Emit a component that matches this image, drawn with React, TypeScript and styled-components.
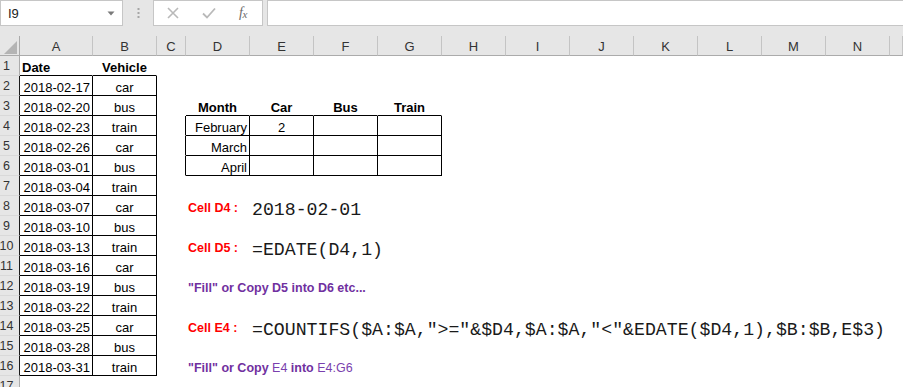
import React from 'react';
import styled, { createGlobalStyle } from 'styled-components';

const Global = createGlobalStyle`
  html, body { margin: 0; padding: 0; background: #fff; overflow: hidden; }
  #root { width: 903px; height: 387px; overflow: hidden; }
`;

const Window = styled.div`
  width: 903px;
  height: 387px;
  overflow: hidden;
  background: #fff;
  font-family: "Liberation Sans", Arial, sans-serif;
  display: flex;
  flex-direction: column;
`;

const FormulaBar = styled.div`
  flex: none;
  height: 36px;
  background: #e6e6e6;
  display: flex;
  align-items: flex-start;
`;

const NameBox = styled.div`
  box-sizing: border-box;
  width: 123px;
  height: 26px;
  background: #fff;
  border: 1px solid #c6c6c6;
  display: flex;
  align-items: center;
  justify-content: space-between;
  padding: 0 7px 0 7px;
  font-size: 13px;
  color: #222;
`;

const Grip = styled.div`
  width: 30px;
  height: 26px;
  display: flex;
  align-items: center;
  justify-content: center;
`;

const FxBox = styled.div`
  box-sizing: border-box;
  width: 110px;
  height: 26px;
  background: #fff;
  border: 1px solid #c6c6c6;
  display: flex;
  align-items: center;
  padding-left: 13px;
  gap: 23px;
`;

const FxLabel = styled.span`
  font-family: "Liberation Serif", "Times New Roman", serif;
  font-style: italic;
  font-size: 14px;
  color: #6b6b6b;
  letter-spacing: -0.5px;
  & > sub {
    font-size: 11px;
    vertical-align: -1px;
  }
`;

const InputBox = styled.div`
  box-sizing: border-box;
  flex: 1;
  height: 26px;
  margin-left: 4px;
  background: #fff;
  border: 1px solid #c6c6c6;
  border-right: none;
`;

const Sheet = styled.div`
  display: grid;
  grid-template-columns: 20px 73px 64px 29px repeat(11, 64px) 1fr;
  grid-auto-rows: 20px;
  overflow: hidden;
`;

const Corner = styled.div`
  box-sizing: border-box;
  background: #e6e6e6;
  border-right: 1px solid #ababab;
  border-bottom: 1px solid #ababab;
  display: flex;
  align-items: flex-end;
  justify-content: flex-end;
  padding: 0 2px 1px 0;
`;

const ColHead = styled.div`
  box-sizing: border-box;
  background: #e6e6e6;
  border-right: 1px solid #c4c4c4;
  border-bottom: 1px solid #ababab;
  display: flex;
  align-items: center;
  justify-content: center;
  font-size: 13px;
  color: #333;
  padding-top: 1px;
`;

const RowHead = styled.div<{ $dark?: boolean }>`
  box-sizing: border-box;
  background: #e6e6e6;
  border-right: 1px solid ${(p) => (p.$dark ? '#1a1a1a' : '#ababab')};
  border-bottom: 1px solid #d9d9d9;
  display: flex;
  align-items: flex-end;
  justify-content: center;
  padding: 0 6px 1px 0;
  font-size: 12.5px;
  line-height: 16px;
  color: #333;
`;

type Align = 'left' | 'center' | 'right';
type Kind = 'data' | 'label' | 'mono' | 'note';

const CellBox = styled.div<{
  $align: Align;
  $bold?: boolean;
  $r?: boolean;
  $b?: boolean;
  $kind: Kind;
  $span: number;
}>`
  box-sizing: border-box;
  grid-column: span ${(p) => p.$span};
  border-right: 1px solid ${(p) => (p.$r ? '#000' : 'transparent')};
  border-bottom: 1px solid ${(p) => (p.$b ? '#000' : 'transparent')};
  display: flex;
  align-items: flex-end;
  justify-content: ${(p) =>
    p.$align === 'left' ? 'flex-start' : p.$align === 'right' ? 'flex-end' : 'center'};
  padding: ${(p) => (p.$kind === 'mono' ? '0 0 0 2px' : '0 2px')};
  white-space: pre;
  overflow: visible;
  font-weight: ${(p) => (p.$bold || p.$kind === 'label' || p.$kind === 'note' ? 700 : 400)};
  font-family: ${(p) =>
    p.$kind === 'mono' ? '"Liberation Mono", "Courier New", monospace' : '"Liberation Sans", Arial, sans-serif'};
  font-size: ${(p) =>
    p.$kind === 'mono' ? '18.2px' : p.$kind === 'data' ? '13px' : '12.5px'};
  line-height: ${(p) => (p.$kind === 'mono' ? '10px' : '14px')};
  color: ${(p) =>
    p.$kind === 'label' ? '#ff0000' : p.$kind === 'note' ? '#7030a0' : p.$kind === 'mono' ? '#1a1a1a' : '#000'};
`;

const Light = styled.span`
  font-weight: 400;
  color: #7a3fae;
`;

interface Spec {
  col: number;
  span?: number;
  text?: React.ReactNode;
  align?: Align;
  bold?: boolean;
  r?: boolean;
  b?: boolean;
  kind?: Kind;
}

const COLS = ['A', 'B', 'C', 'D', 'E', 'F', 'G', 'H', 'I', 'J', 'K', 'L', 'M', 'N', ''];

const trips: [string, string][] = [
  ['2018-02-17', 'car'],
  ['2018-02-20', 'bus'],
  ['2018-02-23', 'train'],
  ['2018-02-26', 'car'],
  ['2018-03-01', 'bus'],
  ['2018-03-04', 'train'],
  ['2018-03-07', 'car'],
  ['2018-03-10', 'bus'],
  ['2018-03-13', 'train'],
  ['2018-03-16', 'car'],
  ['2018-03-19', 'bus'],
  ['2018-03-22', 'train'],
  ['2018-03-25', 'car'],
  ['2018-03-28', 'bus'],
  ['2018-03-31', 'train'],
];

const FORMULA = '=COUNTIFS($A:$A,">="&$D4,$A:$A,"<"&EDATE($D4,1),$B:$B,E$3)';

function buildRows(): Spec[][] {
  const rows: Spec[][] = [];
  for (let r = 1; r <= 17; r++) {
    const s: Spec[] = [];
    if (r === 1) {
      s.push({ col: 0, text: 'Date', align: 'left', bold: true, b: true });
      s.push({ col: 1, text: 'Vehicle', align: 'center', bold: true, b: true });
    } else if (r <= 16) {
      const [d, v] = trips[r - 2];
      s.push({ col: 0, text: d, align: 'right', r: true, b: true });
      s.push({ col: 1, text: v, align: 'center', r: true, b: true });
    }
    if (r === 3) {
      ['Month', 'Car', 'Bus', 'Train'].forEach((t, i) =>
        s.push({ col: 3 + i, text: t, align: 'center', bold: true, b: true })
      );
    }
    if (r >= 4 && r <= 6) {
      s.push({ col: 2, r: true });
      s.push({ col: 3, text: ['February', 'March', 'April'][r - 4], align: 'right', r: true, b: true });
      s.push({ col: 4, text: r === 4 ? '2' : '', align: 'center', r: true, b: true });
      s.push({ col: 5, r: true, b: true });
      s.push({ col: 6, r: true, b: true });
    }
    if (r === 8 || r === 10 || r === 14) {
      const label = r === 8 ? 'Cell D4 :' : r === 10 ? 'Cell D5 :' : 'Cell E4 :';
      const value = r === 8 ? '2018-02-01' : r === 10 ? '=EDATE(D4,1)' : FORMULA;
      s.push({ col: 3, text: label, kind: 'label', align: 'left' });
      s.push({ col: 4, span: 11, text: value, kind: 'mono', align: 'left' });
    }
    if (r === 12) {
      s.push({ col: 3, span: 12, text: '"Fill" or Copy D5 into D6 etc...', kind: 'note', align: 'left' });
    }
    if (r === 16) {
      s.push({
        col: 3,
        span: 12,
        kind: 'note',
        align: 'left',
        text: (
          <>
            {'"Fill" or Copy '}
            <Light>E4</Light>
            {' into '}
            <Light>E4:G6</Light>
          </>
        ),
      });
    }
    rows.push(s);
  }
  return rows;
}

const Caret = () => (
  <svg width="8" height="5" viewBox="0 0 8 5">
    <path d="M0.5 0.5 L7.5 0.5 L4 4.5 Z" fill="#7a7a7a" />
  </svg>
);

const Dots = () => (
  <svg width="3" height="12" viewBox="0 0 3 12">
    <rect x="0.5" y="1" width="2" height="2" fill="#a6a6a6" />
    <rect x="0.5" y="5" width="2" height="2" fill="#a6a6a6" />
    <rect x="0.5" y="9" width="2" height="2" fill="#a6a6a6" />
  </svg>
);

const Cancel = () => (
  <svg width="12" height="12" viewBox="0 0 12 12">
    <path d="M1 1 L11 11 M11 1 L1 11" stroke="#b9b9b9" strokeWidth="1.6" fill="none" />
  </svg>
);

const Check = () => (
  <svg width="14" height="12" viewBox="0 0 14 12">
    <path d="M1 6.5 L5 10.5 L13 1.5" stroke="#b9b9b9" strokeWidth="1.8" fill="none" />
  </svg>
);

const Triangle = () => (
  <svg width="13" height="13" viewBox="0 0 13 13">
    <path d="M13 0 L13 13 L0 13 Z" fill="#b4b4b4" />
  </svg>
);

export default function App() {
  const rows = buildRows();
  return (
    <Window>
      <Global />
      <FormulaBar>
        <NameBox>
          <span>I9</span>
          <Caret />
        </NameBox>
        <Grip>
          <Dots />
        </Grip>
        <FxBox>
          <Cancel />
          <Check />
          <FxLabel>
            f<sub>x</sub>
          </FxLabel>
        </FxBox>
        <InputBox />
      </FormulaBar>
      <Sheet>
        <Corner>
          <Triangle />
        </Corner>
        {COLS.map((c, i) => (
          <ColHead key={`c${i}`}>{c}</ColHead>
        ))}
        {rows.map((specs, i) => {
          const r = i + 1;
          const out: React.ReactNode[] = [
            <RowHead key={`h${r}`} $dark={r >= 2 && r <= 16}>
              {r}
            </RowHead>,
          ];
          let col = 0;
          const sorted = [...specs].sort((a, b) => a.col - b.col);
          for (const sp of sorted) {
            while (col < sp.col) {
              out.push(<CellBox key={`${r}-${col}`} $align="left" $kind="data" $span={1} />);
              col++;
            }
            const span = sp.span ?? 1;
            out.push(
              <CellBox
                key={`${r}-${col}`}
                $align={sp.align ?? 'left'}
                $bold={sp.bold}
                $r={sp.r}
                $b={sp.b}
                $kind={sp.kind ?? 'data'}
                $span={span}
              >
                {sp.text}
              </CellBox>
            );
            col += span;
          }
          while (col < COLS.length) {
            out.push(<CellBox key={`${r}-${col}`} $align="left" $kind="data" $span={1} />);
            col++;
          }
          return <React.Fragment key={r}>{out}</React.Fragment>;
        })}
      </Sheet>
    </Window>
  );
}
